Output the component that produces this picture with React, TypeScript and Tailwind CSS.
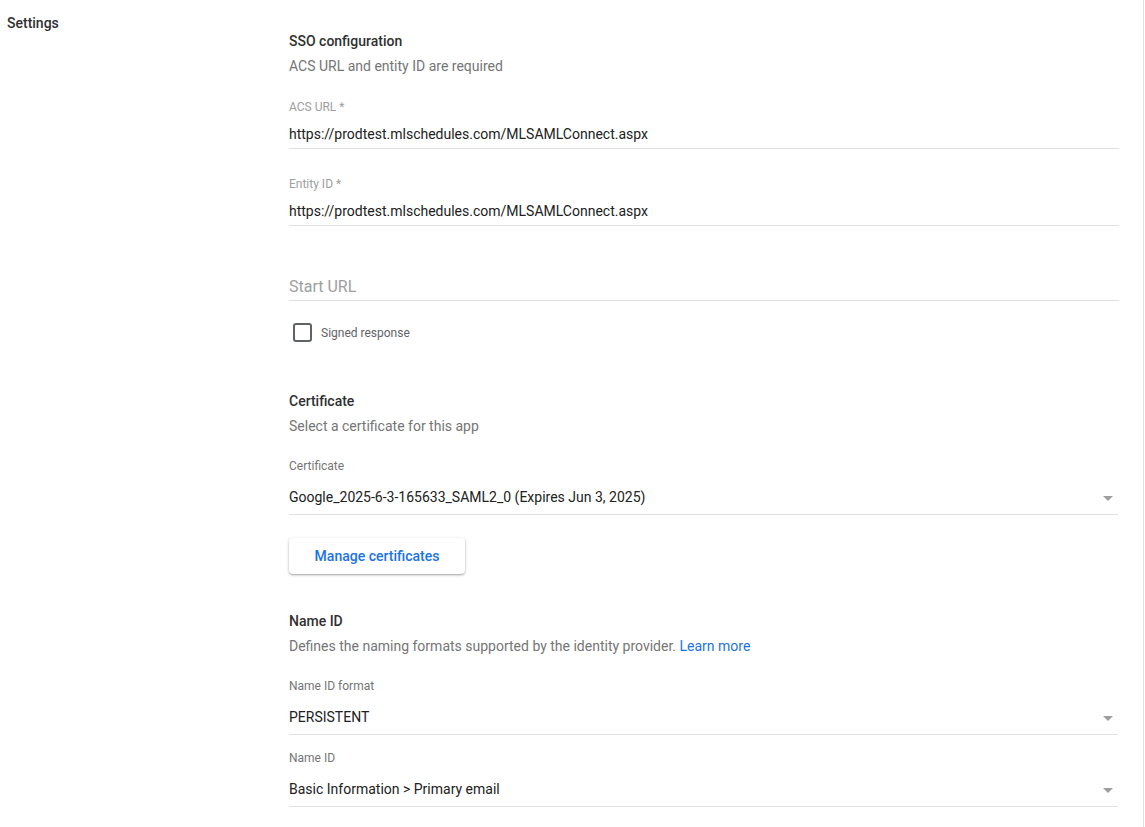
import type { ReactNode } from 'react';

const font = { fontFamily: 'Roboto, "Noto Sans", Arial, sans-serif' };

function Heading({ title, children }: { title: string; children: ReactNode }) {
  return (
    <div>
      <h2 className="text-[14px] leading-5 font-medium text-[#303030]">{title}</h2>
      <p className="mt-[5px] text-[14px] leading-5 text-[#757575]">{children}</p>
    </div>
  );
}

function TextField({ label, value }: { label: string; value: string }) {
  return (
    <div>
      <label className="block text-[12px] leading-4 text-[#9e9e9e]">{label}</label>
      <div className="mt-[9px] text-[14px] leading-5 text-[#212121] pb-[4px] border-b border-[#e0e0e0]">
        {value}
      </div>
    </div>
  );
}

function SelectField({ label, value }: { label: string; value: string }) {
  return (
    <div>
      <label className="block text-[12px] leading-4 text-[#757575]">{label}</label>
      <div className="mt-[13px] flex items-center justify-between pb-[7px] border-b border-[#e0e0e0] w-[829px]">
        <span className="text-[14px] leading-5 text-[#212121]">{value}</span>
        <svg width="10" height="5" viewBox="0 0 10 5" className="mr-[5px] mt-[2px]">
          <path d="M0 0h10L5 5z" fill="#9e9e9e" />
        </svg>
      </div>
    </div>
  );
}

export default function App() {
  return (
    <main style={font} className="min-h-[827px] w-[1144px] bg-white border-r border-[#e0e0e0] flex">
      <aside className="w-[289px] shrink-0 pl-[7px] pt-[13px]">
        <h1 className="text-[14px] leading-5 font-medium text-[#303030]">Settings</h1>
      </aside>

      <section className="w-[830px] pt-[31px]">
        <Heading title="SSO configuration">ACS URL and entity ID are required</Heading>

        <div className="mt-[23px]">
          <TextField label="ACS URL *" value="https://prodtest.mlschedules.com/MLSAMLConnect.aspx" />
        </div>

        <div className="mt-[27px]">
          <TextField label="Entity ID *" value="https://prodtest.mlschedules.com/MLSAMLConnect.aspx" />
        </div>

        <div className="mt-[49px] pb-[1px] border-b border-[#e0e0e0]">
          <span className="text-[16px] leading-5 text-[#9e9e9e]">Start URL</span>
        </div>

        <label className="mt-[22px] ml-[4px] flex items-center gap-[9px]">
          <span className="w-[19px] h-[19px] rounded-[3px] border-2 border-[#5f6368]" />
          <span className="text-[12px] leading-4 text-[#5f6368]">Signed response</span>
        </label>

        <div className="mt-[49px]">
          <Heading title="Certificate">Select a certificate for this app</Heading>
        </div>

        <div className="mt-[22px]">
          <SelectField label="Certificate" value="Google_2025-6-3-165633_SAML2_0 (Expires Jun 3, 2025)" />
        </div>

        <button
          type="button"
          className="mt-[23px] w-[176px] h-[36px] rounded-[4px] bg-white text-[14px] font-medium text-[#1a73e8] shadow-[0_1px_3px_rgba(0,0,0,0.3),0_1px_1px_rgba(0,0,0,0.1)]"
        >
          Manage certificates
        </button>

        <div className="mt-[37px]">
          <Heading title="Name ID">
            Defines the naming formats supported by the identity provider.{' '}
            <a className="text-[#1a73e8]">Learn more</a>
          </Heading>
        </div>

        <div className="mt-[22px]">
          <SelectField label="Name ID format" value="PERSISTENT" />
        </div>

        <div className="mt-[15px]">
          <SelectField label="Name ID" value="Basic Information > Primary email" />
        </div>
      </section>
    </main>
  );
}
